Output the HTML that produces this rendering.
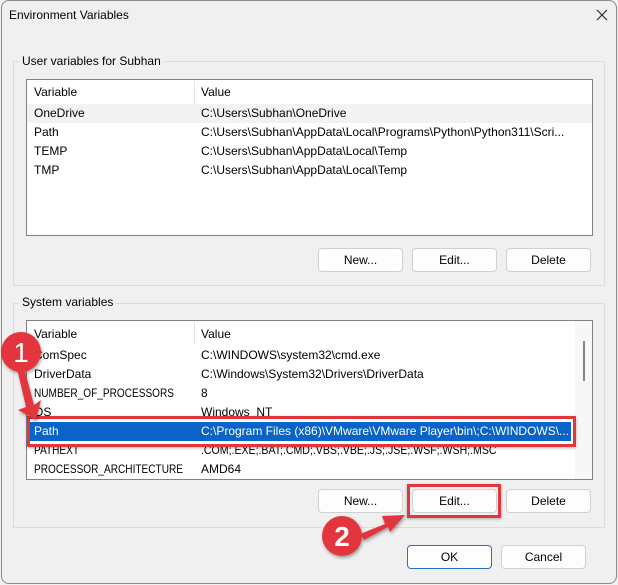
<!DOCTYPE html>
<html><head><style>
*{box-sizing:border-box;margin:0;padding:0}
body{width:618px;height:585px;background:#f0f0f0;font-family:"Liberation Sans",sans-serif;font-size:12px;color:#000;position:relative;overflow:hidden}
.abs{position:absolute}
.win{left:1px;top:0;width:616px;height:584px;border:1px solid #8a8a8a;border-radius:8px;background:#f0f0f0}
.grp{border:1px solid #dcdcdc;}
.lbl{background:#f0f0f0;padding:0 3px}
.list{background:#fff;border:1px solid #828282}
.btn{background:#fdfdfd;border:1px solid #d0d0d0;border-radius:4px;text-align:center;line-height:22px}
.row{position:absolute;left:0;height:19px;line-height:19px;width:100%}
.row span{position:absolute;white-space:nowrap;transform-origin:left center}
.n{transform:scaleX(.84)}
.m{transform:scaleX(.88)}
</style></head><body>
<div class="abs win"></div>
<div class="abs" style="left:9px;top:8px;font-size:12px">Environment Variables</div>
<svg class="abs" style="left:596px;top:9px" width="12" height="12"><path d="M1 1L11 11M11 1L1 11" stroke="#222" stroke-width="1.1"/></svg>

<div class="abs grp" style="left:13px;top:61px;width:592px;height:225px"></div>
<div class="abs lbl" style="left:19px;top:54px">User variables for Subhan</div>
<div class="abs list" style="left:26px;top:79px;width:567px;height:157px">
 <div class="row" style="top:1px;height:23px;line-height:23px"><span style="left:7px">Variable</span><span style="left:174px">Value</span></div>
 <div class="abs" style="left:167px;top:1px;width:1px;height:23px;background:#e5e5e5"></div>
 <div class="abs" style="left:0;top:24px;width:100%;height:19px;background:#f3f3f3"></div>
 <div class="row" style="top:24px"><span style="left:7px">OneDrive</span><span style="left:174px">C:\Users\Subhan\OneDrive</span></div>
 <div class="row" style="top:43px"><span style="left:7px">Path</span><span style="left:174px">C:\Users\Subhan\AppData\Local\Programs\Python\Python311\Scri...</span></div>
 <div class="row" style="top:62px"><span style="left:7px">TEMP</span><span style="left:174px">C:\Users\Subhan\AppData\Local\Temp</span></div>
 <div class="row" style="top:81px"><span style="left:7px">TMP</span><span style="left:174px">C:\Users\Subhan\AppData\Local\Temp</span></div>
</div>
<div class="abs btn" style="left:318px;top:248px;width:85px;height:24px">New...</div>
<div class="abs btn" style="left:412px;top:248px;width:85px;height:24px">Edit...</div>
<div class="abs btn" style="left:506px;top:248px;width:85px;height:24px">Delete</div>

<div class="abs grp" style="left:13px;top:303px;width:592px;height:225px"></div>
<div class="abs lbl" style="left:19px;top:295px">System variables</div>
<div class="abs list" style="left:26px;top:320px;width:567px;height:160px;overflow:hidden">
 <div class="row" style="top:1px;height:24px;line-height:24px"><span style="left:7px">Variable</span><span style="left:174px">Value</span></div>
 <div class="abs" style="left:167px;top:1px;width:1px;height:23px;background:#e5e5e5"></div>
 <div class="row" style="top:25px"><span style="left:7px">ComSpec</span><span style="left:174px">C:\WINDOWS\system32\cmd.exe</span></div>
 <div class="row" style="top:44px"><span style="left:7px">DriverData</span><span style="left:174px">C:\Windows\System32\Drivers\DriverData</span></div>
 <div class="row" style="top:63px"><span class="n" style="left:7px">NUMBER_OF_PROCESSORS</span><span style="left:174px">8</span></div>
 <div class="row" style="top:82px"><span style="left:7px">OS</span><span style="left:174px">Windows_NT</span></div>
 <div class="abs" style="left:1px;top:101px;width:543px;height:19px;background:#0a64c8"></div>
 <div class="row" style="top:101px;color:#fff"><span style="left:7px">Path</span><span style="left:174px">C:\Program Files (x86)\VMware\VMware Player\bin\;C:\WINDOWS\...</span></div>
 <div class="row" style="top:120px"><span class="n" style="left:7px">PATHEXT</span><span class="m" style="left:174px">.COM;.EXE;.BAT;.CMD;.VBS;.VBE;.JS;.JSE;.WSF;.WSH;.MSC</span></div>
 <div class="row" style="top:139px"><span class="n" style="left:7px">PROCESSOR_ARCHITECTURE</span><span style="left:174px">AMD64</span></div>
 <div class="abs" style="left:548px;top:0;width:18px;height:158px;background:#f7f7f7"></div>
 <div class="abs" style="left:556px;top:20px;width:2px;height:40px;background:#858585"></div>
</div>
<div class="abs" style="left:27px;top:416px;width:549px;height:31px;border:3px solid #e2363c;box-shadow:0 1px 3px rgba(0,0,0,.3)"></div>

<div class="abs btn" style="left:318px;top:489px;width:85px;height:24px">New...</div>
<div class="abs btn" style="left:412px;top:489px;width:85px;height:24px">Edit...</div>
<div class="abs" style="left:407px;top:484px;width:94px;height:34px;border:3px solid #e2363c;box-shadow:0 1px 3px rgba(0,0,0,.3)"></div>
<div class="abs btn" style="left:506px;top:489px;width:85px;height:24px">Delete</div>
<div class="abs btn" style="left:407px;top:545px;width:85px;height:24px;border-color:#2a6fc6">OK</div>
<div class="abs btn" style="left:501px;top:545px;width:85px;height:24px">Cancel</div>

<svg class="abs" style="left:0;top:0" width="618" height="585">
 <defs><filter id="s"><feDropShadow dx="1" dy="2" stdDeviation="1.5" flood-opacity=".35"/></filter></defs>
 <g filter="url(#s)" fill="#e2363c">
  <path d="M22 360 L34 405 L41 400 L36 420 L18 410 L26 407 L16 364 Z"/>
  <circle cx="21" cy="352" r="20"/>
  <path d="M360 534 L385 524 L382 516 L405 515 L390 532 L388 527 L364 540 Z"/>
  <circle cx="342" cy="536" r="20"/>
 </g>
 <text x="21" y="362" fill="#fff" font-family="Liberation Sans" font-size="28" text-anchor="middle">1</text>
 <text x="342" y="546" fill="#fff" font-family="Liberation Sans" font-size="28" font-weight="bold" text-anchor="middle">2</text>
</svg>
</body></html>
